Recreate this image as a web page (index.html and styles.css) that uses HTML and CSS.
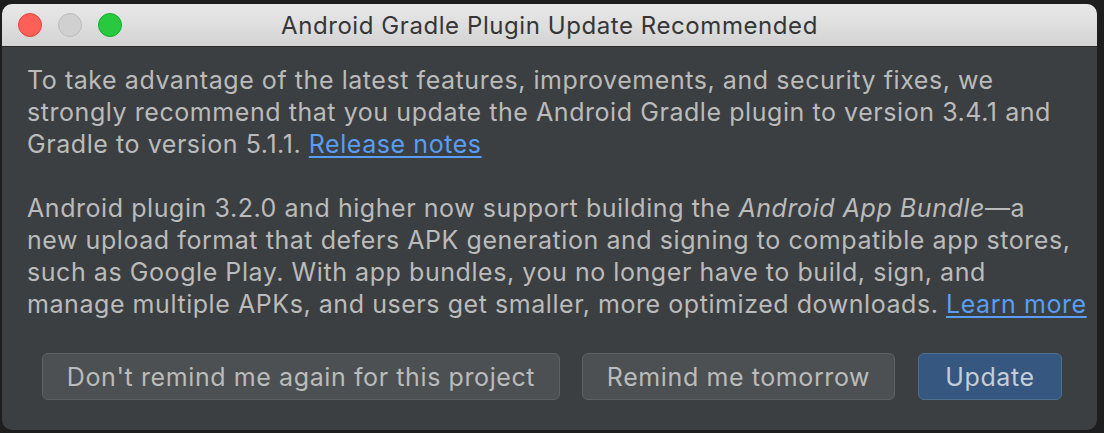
FILE: index.html
```html
<!DOCTYPE html>
<html>
<head>
<meta charset="utf-8">
<link rel="stylesheet" href="styles.css">
</head>
<body>
<div class="window">
  <div class="titlebar">
    <div class="lights">
      <span class="light red"></span>
      <span class="light gray"></span>
      <span class="light green"></span>
    </div>
    <div class="title">Android Gradle Plugin Update Recommended</div>
  </div>
  <div class="content">
    <p class="para">To take advantage of the latest features, improvements, and security fixes, we<br>strongly recommend that you update the Android Gradle plugin to version 3.4.1 and<br>Gradle to version 5.1.1. <a class="link" href="#">Release notes</a></p>
    <p class="para">Android plugin 3.2.0 and higher now support building the <em>Android App Bundle</em>—a<br>new upload format that defers APK generation and signing to compatible app stores,<br>such as Google Play. With app bundles, you no longer have to build, sign, and<br>manage multiple APKs, and users get smaller, more optimized downloads. <a class="link" href="#">Learn more</a></p>
  </div>
  <div class="actions">
    <button class="btn btn-wide">Don't remind me again for this project</button>
    <button class="btn btn-mid">Remind me tomorrow</button>
    <button class="btn btn-primary">Update</button>
  </div>
</div>
</body>
</html>
```
FILE: styles.css
```css
html, body {
  margin: 0;
  padding: 0;
  background: #1e1e1e;
  width: 1104px;
  height: 433px;
  overflow: hidden;
}
body {
  padding: 4px 0 0 2px;
  box-sizing: border-box;
  font-family: Inter, "Noto Sans", sans-serif;
}
.window {
  width: 1095px;
  height: 426px;
  background: #3c3f41;
  border-radius: 10px;
  overflow: hidden;
  display: flex;
  flex-direction: column;
  box-sizing: border-box;
}
.titlebar {
  position: relative;
  height: 43px;
  flex: none;
  background: linear-gradient(#e9e9e9, #d3d3d3);
  border-bottom: 1px solid #2a2a2a;
  box-sizing: border-box;
  display: flex;
  align-items: center;
  justify-content: center;
}
.lights {
  position: absolute;
  left: 16px;
  top: 9px;
  display: flex;
  gap: 16px;
}
.light {
  width: 24px;
  height: 24px;
  border-radius: 50%;
  box-sizing: border-box;
}
.red { background: #fe5f57; border: 1px solid #e2463f; }
.gray { background: #d0d0d0; border: 1px solid #bcbcbc; }
.green { background: #28c93f; border: 1px solid #14ae2c; }
.title {
  font-size: 24px;
  color: #363636;
  letter-spacing: 0.57px;
}
.content {
  padding: 17px 0 0 25px;
  color: #bbbbbb;
  font-size: 25px;
  line-height: 32px;
  letter-spacing: 0.56px;
  white-space: nowrap;
}
.para {
  margin: 0 0 32px;
}
.para:last-child { margin-bottom: 0; }
.link {
  color: #589df6;
  text-decoration: underline;
  text-underline-offset: 3px;
}
.actions {
  margin-top: auto;
  padding: 0 35px 30px 40px;
  display: flex;
  justify-content: flex-end;
  gap: 22px;
}
.btn {
  height: 47px;
  font-family: inherit;
  font-size: 25px;
  letter-spacing: 0.6px;
  color: #bbbbbb;
  background: #4c5052;
  border: 1px solid #5e6162;
  border-radius: 6px;
  padding: 0 20px;
  box-sizing: border-box;
}
.btn-wide { width: 518px; }
.btn-mid { width: 313px; }
.btn-primary {
  width: 144px;
  margin-left: 1px;
  background: #365880;
  border-color: #4c708c;
  color: #c5cdd6;
}
```
